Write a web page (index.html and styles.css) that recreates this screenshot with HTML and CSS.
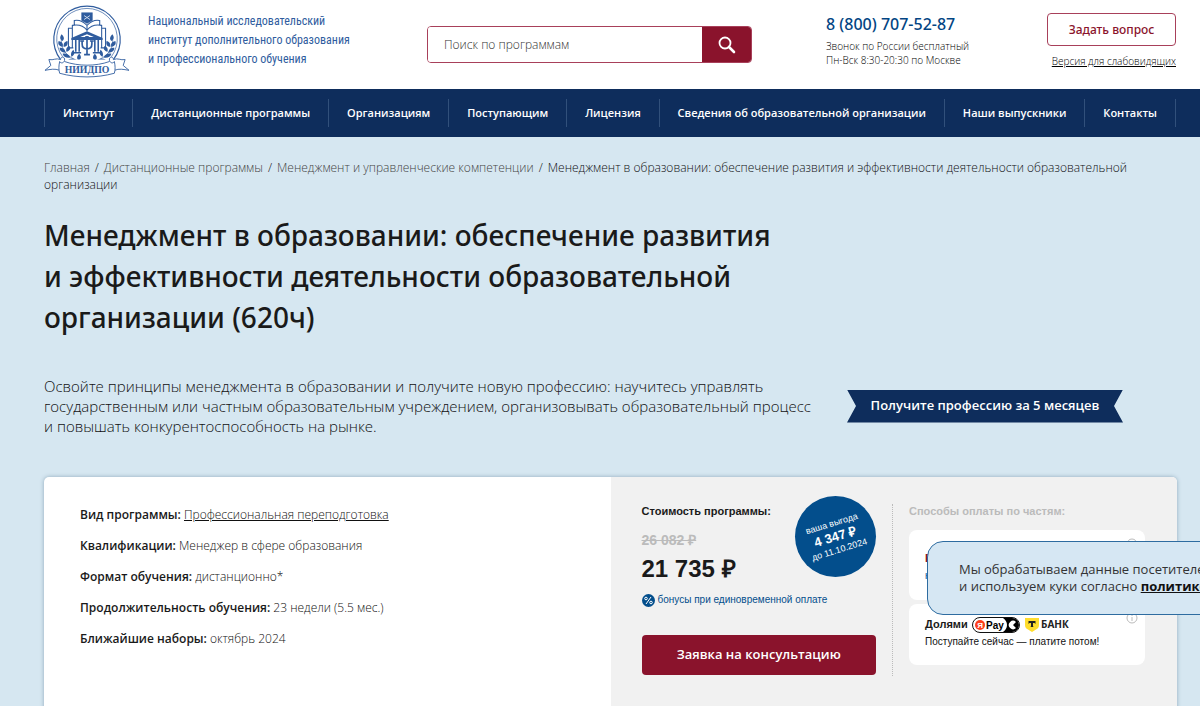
FILE: index.html
```
<!DOCTYPE html>
<html lang="ru">
<head>
<meta charset="utf-8">
<title>Менеджмент в образовании — НИИДПО</title>
<link rel="stylesheet" href="styles.css">
</head>
<body>
<header class="header">
  <a class="brand" href="#">
    <svg class="brand-logo" viewBox="0 0 88 76" fill="none" stroke="#2f5c9e" aria-hidden="true">
      <path d="M17 57A34 34 0 1 1 71 57" stroke-width="1.200"/>
      <path d="M19 54A31 31 0 1 1 69 54" stroke-width=".7"/>
      <path d="M38.500 9h11v8l-5.500 3-5.500-3z" fill="#2f5c9e" stroke-width=".5"/>
      <path d="M41 12l3 2 3-2m-6 4l3-2 3 2" stroke="#c9d6ea" stroke-width="1"/>
      <path d="M44 27c-4-5-10-6-15-5v23M44 27c4-5 10-6 15-5v23M44 22c-4-4-9-6-13-5v5M44 22c4-4 9-6 13-5v5M29 25h-4v20h5M59 25h4v20h-5M44 22v6" stroke-width="1.100"/>
      <path d="M28 35l16-7 16 7v2H28z" fill="#2f5c9e" stroke="none"/>
      <path d="M37 34l7-3 7 3z" fill="#fff" stroke="none"/>
      <path d="M32.500 37v12M36 37v12M52 37v12M55.500 37v12M30 50h8M50 50h8" stroke-width="1.600"/>
      <path d="M44 33v19M39 38v3c0 4 2 5 5 5s5-1 5-5v-3M41 52h6M37 38h4M47 38h4M42 34h4" stroke-width="1.700"/>
      <path d="M18 34c-2 12 6 23 24 26M70 34c2 12-6 23-24 26" stroke-width=".7"/>
      <g fill="#2f5c9e" stroke="none">
        <path d="M19 38c-3-2-3-4-1-7 3 3 3 5 1 7zM19 44c-4-1-5-3-4-6 4 1 5 3 4 6zM20 44c0-4 1-5 4-6 1 4-1 6-4 6zM22 50c-4 0-6-2-6-5 4 0 6 2 6 5zM23 49c-1-4 1-5 3-6 2 3 0 5-3 6zM27 55c-4 1-7-1-8-4 4-1 7 1 8 4zM28 54c-1-3 0-5 2-7 2 3 1 6-2 7zM34 59c-4 2-7 1-9-2 4-2 7-1 9 2zM35 58c-2-3-1-5 1-7 3 3 2 6-1 7zM41 60c-4 2-7 1-8-1 3-2 6-1 8 1z"/>
        <path d="M69 38c3-2 3-4 1-7-3 3-3 5-1 7zM69 44c4-1 5-3 4-6-4 1-5 3-4 6zM68 44c0-4-1-5-4-6-1 4 1 6 4 6zM66 50c4 0 6-2 6-5-4 0-6 2-6 5zM65 49c1-4-1-5-3-6-2 3 0 5 3 6zM61 55c4 1 7-1 8-4-4-1-7 1-8 4zM60 54c1-3 0-5-2-7-2 3-1 6 2 7zM54 59c4 2 7 1 9-2-4-2-7-1-9 2zM53 58c2-3 1-5-1-7-3 3-2 6 1 7zM47 60c4 2 7 1 8-1-3-2-6-1-8 1z"/>
      </g>
      <path d="M16 68c-5-2-9-1-15 0l6-5-2-6c5 1 7-2 12 0M72 68c5-2 9-1 15 0l-6-5 2-6c-5 1-7-2-12 0" fill="#fff" stroke-width=".9"/>
      <path d="M17 57c0-4 5-3 4 1-1 3-4 3-5 1-1 5-1 8 0 12 18 5 38 5 56 0 1-4 1-7 0-12-1 2-4 2-5-1-1-4 4-5 4-1M21 59c14 5 32 5 46 0" fill="#fff" stroke-width=".9"/>
      <text class="logo-word" x="44" y="71">НИИДПО</text>
    </svg>
    <span class="brand-name">Национальный исследовательский<br>институт дополнительного образования<br>и профессионального обучения</span>
  </a>
  <form class="search">
    <input class="search-input" type="search" placeholder="Поиск по программам" aria-label="Поиск по программам">
    <button class="search-button" type="button" aria-label="Найти">
      <svg width="18" height="18" viewBox="0 0 18 18" fill="none" stroke="#fff" aria-hidden="true"><circle cx="7" cy="7" r="5.500" stroke-width="1.800"/><path d="M11 11l5 5" stroke-width="2.600" stroke-linecap="round"/></svg>
    </button>
  </form>
  <div class="phone">
    <a class="phone-number" href="tel:88007075287">8 (800) 707-52-87</a>
    <span>Звонок по России бесплатный</span>
    <span>Пн-Вск 8:30-20:30 по Москве</span>
  </div>
  <div class="ask">
    <button class="ask-button" type="button">Задать вопрос</button>
    <a class="ask-link" href="#">Версия для слабовидящих</a>
  </div>
</header>
<nav class="nav">
  <ul class="nav-list">
    <li><a href="#">Институт</a></li>
    <li><a href="#">Дистанционные программы</a></li>
    <li><a href="#">Организациям</a></li>
    <li><a href="#">Поступающим</a></li>
    <li><a href="#">Лицензия</a></li>
    <li><a href="#">Сведения об образовательной организации</a></li>
    <li><a href="#">Наши выпускники</a></li>
    <li><a href="#">Контакты</a></li>
  </ul>
</nav>
<main class="main">
  <div class="crumbs">
    <a href="#">Главная</a><span class="sep">/</span><a href="#">Дистанционные программы</a><span class="sep">/</span><a href="#">Менеджмент и управленческие компетенции</a><span class="sep">/</span><span>Менеджмент в образовании: обеспечение развития и эффективности деятельности образовательной организации</span>
  </div>
  <h1 class="title">Менеджмент в образовании: обеспечение развития и&nbsp;эффективности деятельности образовательной организации (620ч)</h1>
  <div class="intro">
    <p class="intro-text">Освойте принципы менеджмента в образовании и получите новую профессию: научитесь управлять государственным или частным образовательным учреждением, организовывать образовательный процесс и&nbsp;повышать конкурентоспособность на рынке.</p>
    <div class="ribbon">Получите профессию за 5 месяцев</div>
  </div>
  <section class="card">
    <div class="facts">
      <p><b>Вид программы:</b> <a href="#">Профессиональная переподготовка</a></p>
      <p><b>Квалификации:</b> Менеджер в сфере образования</p>
      <p><b>Формат обучения:</b> дистанционно*</p>
      <p><b>Продолжительность обучения:</b> 23 недели (5.5 мес.)</p>
      <p><b>Ближайшие наборы:</b> октябрь 2024</p>
    </div>
    <div class="offer">
      <div class="price">
        <h2 class="label">Стоимость программы:</h2>
        <del class="price-old">26 082 ₽</del>
        <strong class="price-new">21 735 ₽</strong>
        <p class="bonus"><svg width="13" height="13" viewBox="0 0 13 13" aria-hidden="true"><circle cx="6.500" cy="6.500" r="6.500" fill="#034e8c"/><g fill="none" stroke="#fff"><path d="M4 10l5-7"/><circle cx="4" cy="4.500" r="1.300"/><circle cx="9" cy="8.500" r="1.300"/></g></svg>бонусы при единовременной оплате</p>
        <button class="apply" type="button">Заявка на консультацию</button>
        <div class="badge"><div class="badge-text">ваша выгода<b>4 347 ₽</b>до 11.10.2024</div></div>
      </div>
      <div class="parts">
        <h2 class="label label-muted">Способы оплаты по частям:</h2>
        <div class="option option-first">
          <span class="option-name option-red">Рассрочка</span>
          <span class="option-note option-blue">на обучение</span>
          <svg class="info" width="12" height="12" viewBox="0 0 12 12" aria-hidden="true"><g fill="none" stroke="#bbb"><circle cx="6" cy="6" r="5"/><path d="M6 5v4M6 3v1"/></g></svg>
        </div>
        <div class="option">
          <div class="option-head"><span class="option-name">Долями</span>
            <svg width="48" height="16" viewBox="0 0 48 16" aria-hidden="true"><rect x=".5" y=".5" width="47" height="15" rx="7.500" fill="#fff" stroke="#111"/><path d="M31 1h9a7 7 0 0 1 0 14h-9q4-3 4-7t-4-7z" fill="#000"/><circle cx="8" cy="8" r="5" fill="#fc3f1d"/><text class="ya" x="8" y="11">Я</text><text class="pay" x="14" y="12">Pay</text><path d="M44 5a4.200 4.200 0 1 0 0 6l-3-3z" fill="#fff"/></svg>
            <svg class="bank-logo" width="47" height="15" viewBox="0 0 47 15" aria-hidden="true"><path d="M1 1h14v7q0 3-3 4.500L8 15l-4-2.500Q1 11 1 8z" fill="#ffdd2d"/><path d="M4.500 4h7v3l-1-1H9v3.500l1 .5H6l1-.5V6H5.500l-1 1z" fill="#222"/><text class="bank" x="17" y="11">БАНК</text></svg>
          </div>
          <span class="option-note">Поступайте сейчас — платите потом!</span>
          <svg class="info" width="12" height="12" viewBox="0 0 12 12" aria-hidden="true"><g fill="none" stroke="#bbb"><circle cx="6" cy="6" r="5"/><path d="M6 5v4M6 3v1"/></g></svg>
        </div>
      </div>
    </div>
  </section>
</main>
<aside class="cookie">Мы обрабатываем данные посетителей<br>и используем куки согласно <a href="#">политике</a></aside>
</body>
</html>
```
FILE: styles.css
```
* { box-sizing: border-box; }
body { margin: 0; overflow: hidden; background: #d6e7f1; color: #111; font-family: "Open Sans", sans-serif; font-size: 12px; }
a { color: inherit; }
p, h1, h2 { margin: 0; }
button, input { font-family: inherit; }

.header { display: flex; min-height: 89px; padding: 0 24px 0 44px; background: #fff; }
.brand { display: flex; width: 383px; color: #2f5c9e; text-decoration: none; }
.brand-logo { width: 86px; height: 76px; margin: 3px 18px 0 0; }
.logo-word { font: bold 10px "Liberation Serif", serif; text-anchor: middle; fill: #2f5c9e; stroke: none; }
.brand-name { padding-top: 12px; font-family: "Roboto Condensed", Roboto, sans-serif; font-size: 12px; line-height: 19px; white-space: nowrap; }
.search { display: flex; width: 325px; height: 37px; margin-top: 26px; border: 1px solid #a8405a; border-radius: 4px; overflow: hidden; }
.search-input { flex: 1; min-width: 0; padding: 0 16px; border: 0; background: #fff; font-size: 12px; font-weight: 300; }
.search-input::placeholder { color: #333; }
.search-button { display: grid; place-items: center; width: 49px; padding: 0; border: 0; background: #8a132c; }
.phone { display: flex; flex-direction: column; margin: 14px auto 0 74px; font-size: 10px; line-height: 14px; }
.phone-number { margin-bottom: 5px; color: #034583; font-family: "Noto Sans", "Open Sans", sans-serif; font-size: 16px; font-weight: 500; line-height: 20px; text-decoration: none; }
.ask { display: flex; flex-direction: column; align-items: flex-end; gap: 8px; padding-top: 13px; font-size: 10px; line-height: 14px; }
.phone span, .ask-link { font-weight: 300; color: #000; }
.ask-button { width: 129px; height: 33px; border: 1px solid #a8405a; border-radius: 4px; background: #fff; color: #8a132c; font-family: "Noto Sans", "Open Sans", sans-serif; font-size: 12px; font-weight: 500; }

.nav { padding: 10px 24px 10px 44px; background: #0e2d5c; }
.nav-list { display: flex; margin: 0; padding: 0; border-left: 1px solid #31507b; list-style: none; }
.nav-list li { display: flex; flex: 1 1 auto; justify-content: center; border-right: 1px solid #31507b; }
.nav-list a { color: #fff; font-size: 11px; font-weight: 600; line-height: 28px; text-decoration: none; white-space: nowrap; }

.main { padding: 22px 23px 0 44px; }
.crumbs { font-weight: 300; line-height: 17px; }
.crumbs a { color: #444; text-decoration: none; }
.sep { margin: 0 5px; }
.title { max-width: 780px; margin-top: 22px; color: #1a1a1a; font-family: "Noto Sans", "Open Sans", sans-serif; font-size: 28px; font-weight: 500; line-height: 41px; }
.intro { display: flex; justify-content: space-between; align-items: center; margin-top: 38px; padding-right: 54px; }
.intro-text { width: 780px; font-size: 15px; font-weight: 300; line-height: 20px; }
.ribbon { width: 276px; padding-bottom: 2px; background: #0e2d5c; color: #fff; font-size: 13px; font-weight: 600; line-height: 31px; text-align: center; clip-path: polygon(0 0, 100% 0, calc(100% - 9px) 50%, 100% 100%, 0 100%, 9px 50%); }

.card { display: flex; min-height: 260px; margin-top: 41px; border-radius: 5px; background: #fff; box-shadow: 0 0 4px #8fa9bb; overflow: hidden; }
.facts { display: flex; width: 50%; flex-direction: column; gap: 14px; padding: 29px 36px; font-size: 12px; font-weight: 300; line-height: 17px; }
.facts b { color: #1a1a1a; font-weight: 600; }
.offer { display: flex; width: 50%; padding: 27px 32px 0 31px; background: #f1f1f1; }
.price { position: relative; display: flex; flex: 1; flex-direction: column; align-items: flex-start; height: 172px; margin-right: 16px; font-family: "Liberation Sans", sans-serif; }
.label { color: #1a1a1a; font: bold 11px/14px "Liberation Sans", sans-serif; }
.label-muted { color: #bbb; }
.price-old { margin-top: 14px; color: #bbb; font-size: 14px; font-weight: 700; line-height: 16px; }
.price-new { margin-top: 7px; color: #1a1a1a; font-size: 24px; line-height: 28px; }
.bonus { display: flex; align-items: center; gap: 3px; margin-top: 10px; color: #034e8c; font-size: 10px; line-height: 14px; }
.apply { width: 100%; min-height: 40px; margin-top: 28px; padding: 0 0 2px; border: 0; border-radius: 4px; background: #8a132c; color: #fff; font-family: "Open Sans", sans-serif; font-size: 13px; font-weight: 600; }
.badge { position: absolute; top: -8px; right: 0; display: grid; place-items: center; width: 81px; height: 81px; border-radius: 50%; background: #034e8c; color: #fff; }
.badge-text { font-size: 9px; line-height: 12px; text-align: center; white-space: nowrap; transform: rotate(-17deg); }
.badge-text b { display: block; font-size: 13px; line-height: 15px; }
.parts { width: 253px; height: 172px; padding-left: 16px; border-left: 1px dotted #bbb; }
.option { position: relative; display: flex; flex-direction: column; min-height: 61px; margin-top: 4px; padding: 12px 16px; border-radius: 8px; background: #fff; font-family: "Liberation Sans", sans-serif; }
.option-first { min-height: 70px; margin-top: 12px; padding-top: 20px; }
.option-head { display: flex; align-items: center; gap: 4px; height: 17px; }
.option-name { color: #1a1a1a; font-size: 11px; font-weight: 700; line-height: 17px; }
.option-note { font-size: 10px; line-height: 18px; white-space: nowrap; }
.option-red { color: #8a132c; }
.option-blue { color: #034e8c; }
.info { position: absolute; top: 8px; right: 7px; }
.ya { font: bold 8px "Liberation Sans", sans-serif; fill: #fff; text-anchor: middle; }
.pay { font: bold 10px "Liberation Sans", sans-serif; fill: #000; }
.bank { font: bold 10px "Open Sans", sans-serif; fill: #222; }

.cookie { position: fixed; bottom: 91px; left: calc(100% - 273px); width: 320px; padding: 19px 31px; border: 1px solid #2e6ca0; border-radius: 16px; background: #d6e7f3; color: #333; font-size: 13px; line-height: 17px; white-space: nowrap; }
.cookie a { color: #111; font-weight: 700; }
```
